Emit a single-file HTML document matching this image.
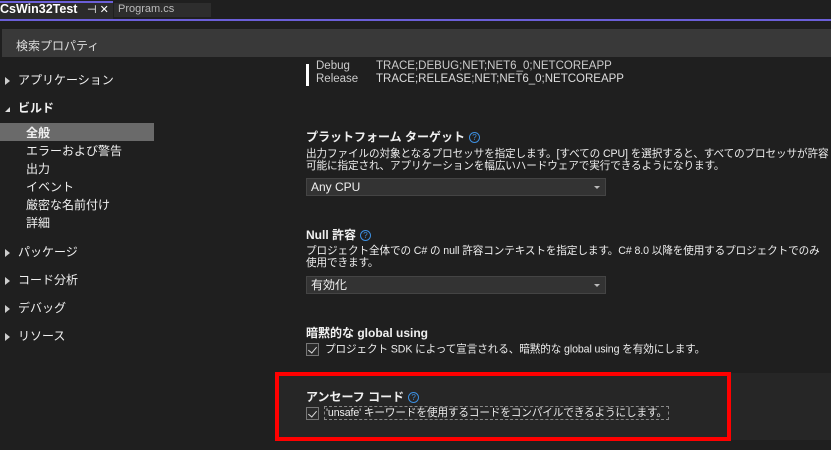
<!DOCTYPE html>
<html><head><meta charset="utf-8"><style>
*{margin:0;padding:0;box-sizing:border-box}
body{width:831px;height:450px;background:#1f1f1f;color:#f0f0f0;font-family:"Liberation Sans","Noto Sans CJK JP",sans-serif;font-size:12px;position:relative;overflow:hidden}
.a{position:absolute;white-space:nowrap}
.tri{display:inline-block;width:0;height:0;border-top:4px solid transparent;border-bottom:4px solid transparent;border-left:5px solid #ccc;margin-right:8px;vertical-align:middle}
.h{font-weight:bold;font-size:12px}
.q{display:inline-block;width:11px;height:11px;border:1px solid #3d8fe0;border-radius:50%;color:#3d8fe0;font-size:8px;line-height:9px;text-align:center;vertical-align:middle;margin-left:4px;font-weight:normal}
.d{font-size:10.6px;line-height:12px;color:#eee;letter-spacing:-0.1px}
.sel{position:absolute;left:306px;width:300px;height:18px;background:#333;border:1px solid #444;font-size:12px;padding-left:4px;line-height:16px}
.sel:after{content:"";position:absolute;right:5px;top:7px;border-left:3px solid transparent;border-right:3px solid transparent;border-top:3px solid #bbb}
.cb{display:inline-block;width:13px;height:13px;border:1px solid #777;background:#2a2a2a;vertical-align:middle;margin-right:6px;position:relative}
.cb:after{content:"";position:absolute;left:3px;top:1px;width:4px;height:7px;border-right:1.5px solid #ddd;border-bottom:1.5px solid #ddd;transform:rotate(40deg)}
</style></head><body>
<div class="a" style="left:0;top:1px;width:113px;height:18px;background:#2b2b2b;border-top:2px solid #6b5fd8"></div>
<div class="a" style="left:0;top:2px;font-weight:bold;font-size:12.5px;color:#fff">CsWin32Test <span style="font-weight:normal;font-size:11px;margin-left:6px">⊣ ✕</span></div>
<div class="a" style="left:114px;top:3px;width:97px;height:14px;background:#2d2d2d"></div>
<div class="a" style="left:118px;top:3px;font-size:11px;color:#bbb">Program.cs</div>
<div class="a" style="left:0;top:19px;width:831px;height:2px;background:#6b5fd8"></div>
<div class="a" style="left:2px;top:29px;width:829px;height:28px;background:#393939"></div>
<div class="a" style="left:16px;top:37px;color:#ddd">検索プロパティ</div>

<div class="a" style="left:5px;top:71px"><span class="tri"></span>アプリケーション</div>
<div class="a" style="left:5px;top:99px;font-weight:bold"><span style="display:inline-block;width:0;height:0;border-left:5px solid transparent;border-bottom:5px solid #ddd;margin-right:8px"></span>ビルド</div>
<div class="a" style="left:0;top:123px;width:154px;height:18px;background:#6a6a6a"></div>
<div class="a" style="left:26px;top:124px;font-weight:bold">全般</div>
<div class="a" style="left:26px;top:142px">エラーおよび警告</div>
<div class="a" style="left:26px;top:160px">出力</div>
<div class="a" style="left:26px;top:178px">イベント</div>
<div class="a" style="left:26px;top:196px">厳密な名前付け</div>
<div class="a" style="left:26px;top:214px">詳細</div>
<div class="a" style="left:5px;top:243px"><span class="tri"></span>パッケージ</div>
<div class="a" style="left:5px;top:271px"><span class="tri"></span>コード分析</div>
<div class="a" style="left:5px;top:299px"><span class="tri"></span>デバッグ</div>
<div class="a" style="left:5px;top:327px"><span class="tri"></span>リソース</div>

<div class="a" style="left:306px;top:64px;width:3px;height:22px;background:#fff"></div>
<div class="a" style="left:316px;top:60px;color:#ccc;font-size:11.5px">Debug</div>
<div class="a" style="left:376px;top:60px;color:#ccc;font-size:11.5px">TRACE;DEBUG;NET;NET6_0;NETCOREAPP</div>
<div class="a" style="left:316px;top:73px;color:#ccc;font-size:11.5px">Release</div>
<div class="a" style="left:376px;top:73px;color:#ddd;font-size:11.5px">TRACE;RELEASE;NET;NET6_0;NETCOREAPP</div>
<div class="a" style="left:2px;top:57px;width:829px;height:3px;background:#1f1f1f"></div>

<div class="a h" style="left:306px;top:128px">プラットフォーム ターゲット<span class="q">?</span></div>
<div class="a d" style="left:306px;top:148px">出力ファイルの対象となるプロセッサを指定します。[すべての CPU] を選択すると、すべてのプロセッサが許容<br>可能に指定され、アプリケーションを幅広いハードウェアで実行できるようになります。</div>
<div class="sel" style="top:178px">Any CPU</div>

<div class="a h" style="left:306px;top:226px">Null 許容<span class="q">?</span></div>
<div class="a d" style="left:306px;top:245px">プロジェクト全体での C# の null 許容コンテキストを指定します。C# 8.0 以降を使用するプロジェクトでのみ<br>使用できます。</div>
<div class="sel" style="top:276px">有効化</div>

<div class="a h" style="left:306px;top:324px">暗黙的な global using</div>
<div class="a d" style="left:306px;top:343px"><span class="cb"></span>プロジェクト SDK によって宣言される、暗黙的な global using を有効にします。</div>

<div class="a" style="left:275px;top:373px;width:556px;height:67px;background:#262626"></div>
<div class="a" style="left:275px;top:372px;width:456px;height:69px;border:4px solid #f00"></div>
<div class="a h" style="left:306px;top:388px">アンセーフ コード<span class="q">?</span></div>
<div class="a d" style="left:306px;top:407px"><span class="cb"></span><span style="outline:1px dashed #888;padding:0 1px">'unsafe' キーワードを使用するコードをコンパイルできるようにします。</span></div>
</body></html>
